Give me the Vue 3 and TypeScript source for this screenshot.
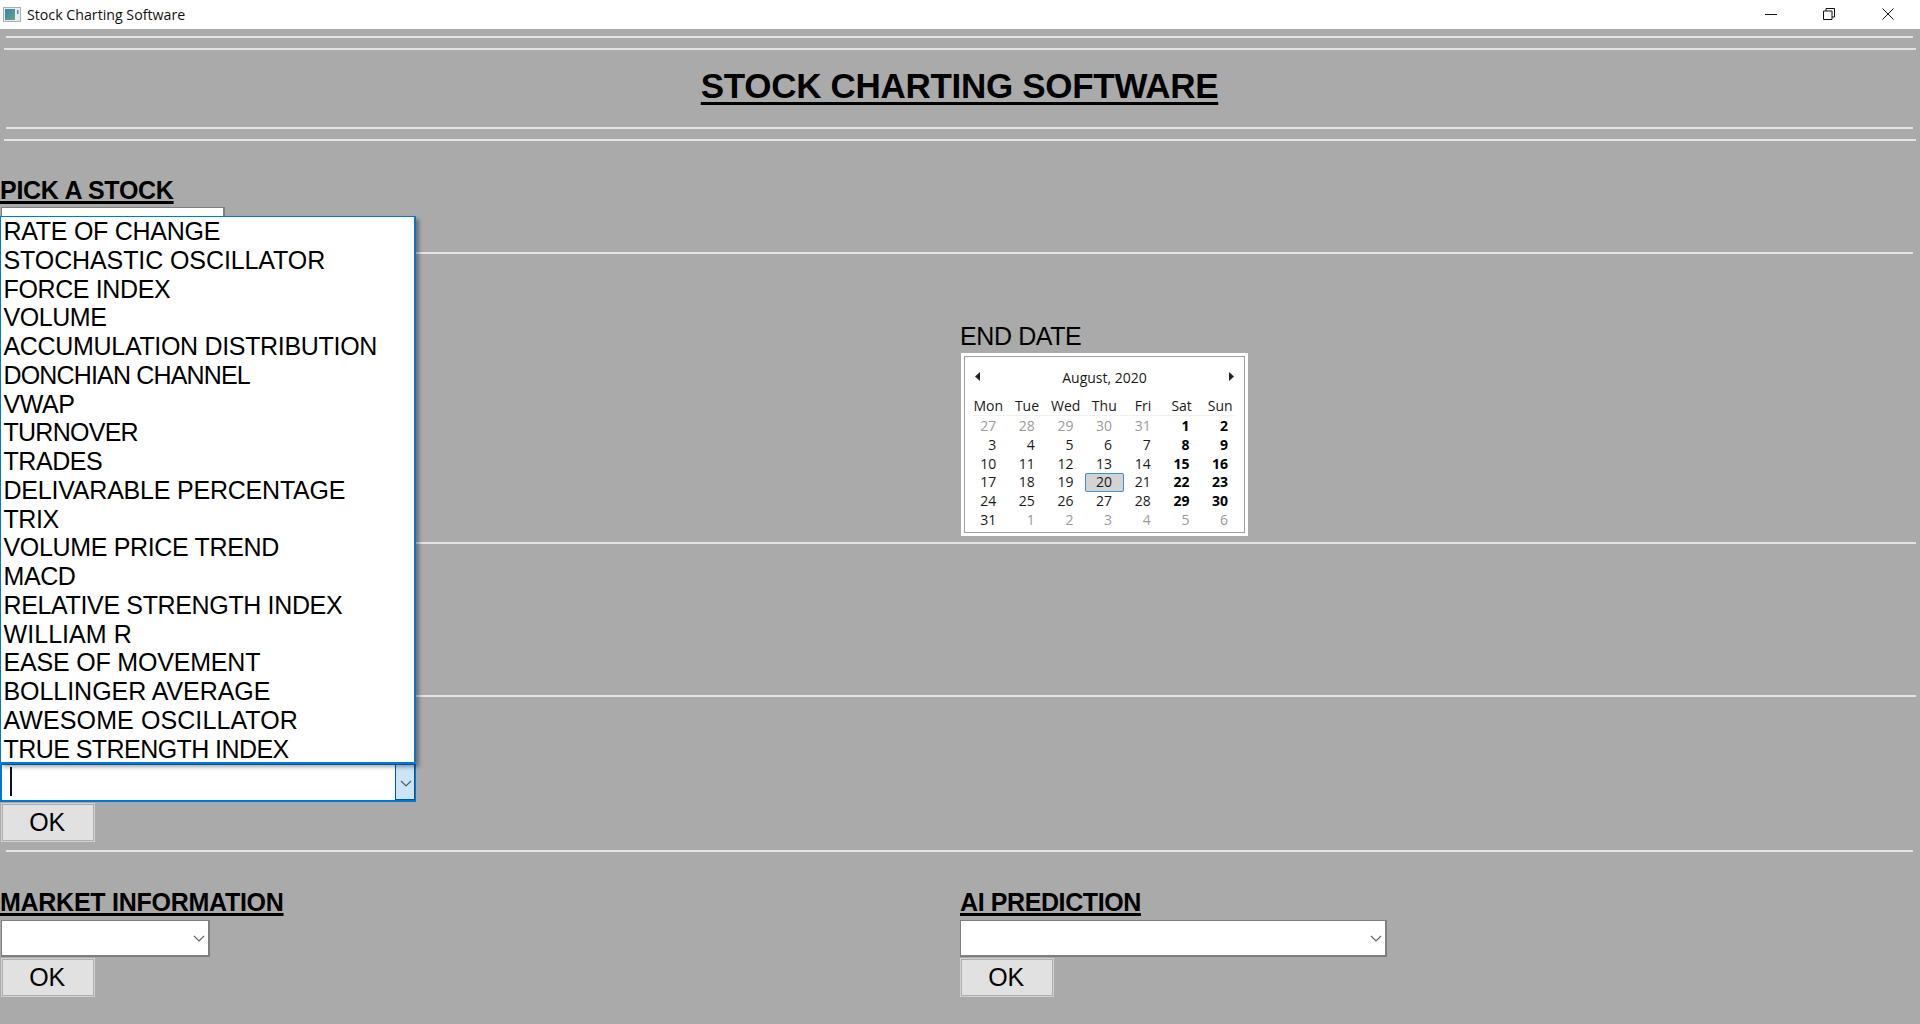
<script setup lang="ts">
interface Indicator { label: string; spacing: number }
const indicators: Indicator[] = [
  { label: 'RATE OF CHANGE', spacing: -0.27 },
  { label: 'STOCHASTIC OSCILLATOR', spacing: -0.1 },
  { label: 'FORCE INDEX', spacing: -0.37 },
  { label: 'VOLUME', spacing: -0.45 },
  { label: 'ACCUMULATION DISTRIBUTION', spacing: -0.32 },
  { label: 'DONCHIAN CHANNEL', spacing: -0.84 },
  { label: 'VWAP', spacing: -0.4 },
  { label: 'TURNOVER', spacing: -0.73 },
  { label: 'TRADES', spacing: -0.45 },
  { label: 'DELIVARABLE PERCENTAGE', spacing: -0.21 },
  { label: 'TRIX', spacing: -0.4 },
  { label: 'VOLUME PRICE TREND', spacing: -0.34 },
  { label: 'MACD', spacing: -0.4 },
  { label: 'RELATIVE STRENGTH INDEX', spacing: -0.35 },
  { label: 'WILLIAM R', spacing: 0.06 },
  { label: 'EASE OF MOVEMENT', spacing: -0.19 },
  { label: 'BOLLINGER AVERAGE', spacing: -0.05 },
  { label: 'AWESOME OSCILLATOR', spacing: 0.1 },
  { label: 'TRUE STRENGTH INDEX', spacing: -0.56 },
]
const weekdays: string[] = ['Mon', 'Tue', 'Wed', 'Thu', 'Fri', 'Sat', 'Sun']
interface Day { n: number; muted: boolean; weekend: boolean; selected: boolean }
const seq: number[] = [27, 28, 29, 30, 31]
for (let i = 1; i <= 31; i++) seq.push(i)
for (let i = 1; i <= 6; i++) seq.push(i)
const days: Day[] = seq.map((n, i) => {
  const muted = i < 5 || i >= 36
  return { n, muted, weekend: !muted && i % 7 >= 5, selected: i === 24 }
})
</script>

<template>
  <div class="window">
    <header class="titlebar">
      <svg class="app-icon" width="18" height="15" viewBox="0 0 18 15">
        <defs>
          <linearGradient id="ico" x1="0" y1="0" x2="1" y2="1">
            <stop offset="0" stop-color="#3f83a6" />
            <stop offset="1" stop-color="#5fa58a" />
          </linearGradient>
        </defs>
        <rect x="0.5" y="0.5" width="17" height="14" fill="#e6ebef" stroke="#a9b1b8" />
        <rect x="2" y="2" width="10" height="11" fill="url(#ico)" />
        <rect x="14" y="3" width="1.5" height="4" fill="#5d8a9a" />
      </svg>
      <span class="app-title">Stock Charting Software</span>
      <div class="controls">
        <span class="ctl">
          <svg width="12" height="12" viewBox="0 0 12 12"><path d="M0 6.5H12" stroke="#111" fill="none" /></svg>
        </span>
        <span class="ctl">
          <svg width="12" height="12" viewBox="0 0 12 12"><path d="M0.5 3H9V11.5H0.5ZM3 3V0.5H11.5V9H9" stroke="#111" fill="none" /></svg>
        </span>
        <span class="ctl">
          <svg width="12" height="12" viewBox="0 0 12 12"><path d="M0.5 0.5L11.5 11.5M11.5 0.5L0.5 11.5" stroke="#111" fill="none" /></svg>
        </span>
      </div>
    </header>

    <main class="content">
      <div class="rule short first"></div>
      <div class="rule long second"></div>
      <h1 class="main-title"><span>STOCK CHARTING SOFTWARE</span></h1>
      <div class="rule short"></div>
      <div class="rule long second"></div>

      <section class="sec sec-stock">
        <h2 class="heading">PICK A STOCK</h2>
        <div class="combo stock-combo"></div>
      </section>
      <div class="rule short"></div>

      <section class="sec sec-dates">
        <div class="date-col">
          <div class="plain-label">END DATE</div>
          <div class="calendar">
            <div class="cal-inner">
              <div class="cal-head">
                <svg width="6" height="9" viewBox="0 0 6 9"><path d="M5 0V9L0 4.5Z" fill="#222" /></svg>
                <span class="cal-month">August, 2020</span>
                <svg width="6" height="9" viewBox="0 0 6 9"><path d="M1 0V9L6 4.5Z" fill="#222" /></svg>
              </div>
              <div class="cal-weekdays">
                <span v-for="w in weekdays" :key="w">{{ w }}</span>
              </div>
              <div class="cal-days">
                <span
                  v-for="(d, i) in days"
                  :key="i"
                  class="day"
                  :class="{ muted: d.muted, weekend: d.weekend, selected: d.selected }"
                >{{ d.n }}</span>
              </div>
            </div>
          </div>
        </div>
      </section>
      <div class="rule long"></div>

      <section class="sec sec-empty"></section>
      <div class="rule long"></div>

      <section class="sec sec-indicator">
        <div class="indicator-box">
          <ul class="popup">
            <li
              v-for="item in indicators"
              :key="item.label"
              :style="{ letterSpacing: item.spacing + 'px' }"
            >{{ item.label }}</li>
          </ul>
          <div class="combo-focused">
            <span class="field"><i class="caret"></i></span>
            <span class="drop-btn">
              <svg width="12" height="7" viewBox="0 0 12 7"><path d="M1 1L6 6L11 1" stroke="#4b5a68" stroke-width="1.2" fill="none" /></svg>
            </span>
          </div>
          <button class="ok" type="button">OK</button>
        </div>
      </section>
      <div class="rule short"></div>

      <section class="sec sec-bottom">
        <div class="col-left">
          <h2 class="heading">MARKET INFORMATION</h2>
          <div class="combo market-combo">
            <svg width="12" height="7" viewBox="0 0 12 7"><path d="M1 1L6 6L11 1" stroke="#666" stroke-width="1.2" fill="none" /></svg>
          </div>
          <button class="ok" type="button">OK</button>
        </div>
        <div class="col-right">
          <h2 class="heading ai">AI PREDICTION</h2>
          <div class="combo ai-combo">
            <svg width="12" height="7" viewBox="0 0 12 7"><path d="M1 1L6 6L11 1" stroke="#666" stroke-width="1.2" fill="none" /></svg>
          </div>
          <button class="ok" type="button">OK</button>
        </div>
      </section>
    </main>
  </div>
</template>

<style>
html, body { margin: 0; background: #aaaaaa; }
</style>

<style scoped>
.window {
  width: 1920px;
  height: 1024px;
  display: flex;
  flex-direction: column;
  overflow: hidden;
  font-family: "Liberation Sans", Arial, sans-serif;
  color: #000;
}
.titlebar {
  height: 29px;
  flex: none;
  background: #fff;
  display: flex;
  align-items: center;
  padding-left: 3px;
}
.app-icon { flex: none; margin-bottom: 1px; }
.app-title {
  margin-left: 6px;
  font: 14.2px "Open Sans", sans-serif;
  color: #111;
  margin-bottom: 1px;
}
.controls { margin-left: auto; display: flex; padding-right: 3px; }
.ctl {
  width: 58.5px;
  height: 29px;
  display: flex;
  align-items: center;
  justify-content: center;
  padding-bottom: 1px;
  box-sizing: border-box;
}
.content { flex: 1; background: #aaaaaa; display: flex; flex-direction: column; min-height: 0; }
.rule { flex: none; height: 2px; background: #e4e4e4; }
.rule.short { margin: 0 7px 0 6px; }
.rule.long { margin: 0 4px; }
.rule.first { margin-top: 7px; }
.rule.second { margin-top: 10px; }
.main-title {
  margin: 0;
  height: 77px;
  display: flex;
  justify-content: center;
  box-sizing: border-box;
  padding-top: 15px;
  font-size: 35px;
  line-height: 42px;
  letter-spacing: -0.3px;
  font-weight: 700;
  text-decoration: underline;
  text-decoration-thickness: 3px;
  text-underline-offset: 4px;
}
.main-title span { margin-left: -1px; }
.heading {
  margin: 0;
  font-size: 25px;
  line-height: 32px;
  letter-spacing: -0.27px;
  font-weight: 700;
  text-decoration: underline;
  text-decoration-thickness: 3px;
  text-underline-offset: 2px;
}
.heading.ai { letter-spacing: -0.4px; }
.plain-label { font-size: 25px; line-height: 32px; letter-spacing: -0.4px; }
.sec { flex: none; box-sizing: border-box; }
.sec-stock { height: 111px; padding-top: 33px; }
.combo {
  box-sizing: border-box;
  background: #fff;
  border: 1px solid #7f7f7f;
  border-width: 1px 2px 2px 1px;
  height: 37px;
  display: flex;
  align-items: center;
  justify-content: flex-end;
  padding-right: 3px;
  margin-top: 2px;
}
.stock-combo { width: 224px; margin-left: 1px; margin-top: 1px; }
.market-combo { width: 209px; }
.ai-combo { width: 427px; }
.sec-dates { height: 288px; padding: 66px 0 0 960px; }
.calendar {
  box-sizing: border-box;
  width: 287px;
  height: 183px;
  margin: 1px 0 0 1px;
  background: #fff;
  padding: 3px;
}
.cal-inner {
  box-sizing: border-box;
  height: 177px;
  border: 1px solid #a0a0a0;
  background: #fff;
  padding: 0 8px 0 4px;
  font-family: "Open Sans", sans-serif;
  color: #1a1a1a;
}
.cal-head {
  height: 25px;
  margin-top: 8px;
  display: flex;
  align-items: center;
  justify-content: space-between;
  padding: 0 2px 0 6px;
}
.cal-head svg { margin-bottom: 2px; }
.cal-month { font-size: 14px; }
.cal-weekdays, .cal-days { display: grid; grid-template-columns: repeat(7, 38.67px); }
.cal-weekdays {
  font-size: 14px;
  line-height: 20px;
  text-align: center;
  height: 20px;
  margin-top: 6px;
  position: relative;
}
.cal-weekdays::after {
  content: "";
  position: absolute;
  left: 4px;
  width: 262px;
  bottom: 0;
  height: 1px;
  background: #f0f0f0;
}
.cal-days { font-size: 14px; grid-auto-rows: 18.8px; margin-top: 1px; }
.day {
  text-align: right;
  padding-right: 11.5px;
  line-height: 18.8px;
  box-sizing: border-box;
}
.day.muted { color: #9a9a9a; }
.day.weekend { font-weight: 700; color: #000; }
.day.selected {
  background: #d3d3d3;
  outline: 1px solid #3f8fd6;
  outline-offset: -1px;
  border-radius: 2px;
}
.sec-empty { height: 151px; }
.sec-indicator { height: 153px; padding-top: 67px; }
.indicator-box { position: relative; width: 416px; }
.popup {
  position: absolute;
  left: 0;
  right: 0;
  top: -548px;
  margin: 0;
  box-sizing: border-box;
  height: 548px;
  border: 1px solid #0078d7;
  border-width: 1px 2px 2px 1px;
  background: #fff;
  padding: 0 0 0 2.5px;
  list-style: none;
  box-shadow: 3px 3px 4px rgba(0, 0, 0, 0.35);
  z-index: 2;
}
.popup li { font-size: 25px; line-height: 28.75px; white-space: nowrap; }
.combo-focused {
  display: flex;
  height: 38px;
  box-sizing: border-box;
  border: 1px solid #0078d7;
  border-width: 1px 1px 2px 2px;
  background: #fff;
}
.field { flex: 1; position: relative; }
.caret { position: absolute; left: 8px; top: 2px; width: 1.5px; height: 29px; background: #111; }
.drop-btn {
  width: 20px;
  flex: none;
  background: #cce4f7;
  border-left: 1px solid #005499;
  box-shadow: inset -1px 0 0 #005499, inset 0 -1px 0 #005499;
  display: flex;
  align-items: center;
  justify-content: center;
  box-sizing: border-box;
  padding-top: 1px;
}
.ok {
  display: block;
  box-sizing: border-box;
  width: 94px;
  height: 39px;
  margin: 1px 0 0 1px;
  padding: 0 2px 0 0;
  background: #e1e1e1;
  border: 2px solid #adadad;
  outline: 1px solid #d2d2d2;
  outline-offset: -1px;
  font: 25px "Liberation Sans", Arial, sans-serif;
  letter-spacing: -0.27px;
  color: #000;
}
.sec-bottom { display: flex; padding-top: 34px; }
.col-left { width: 960px; }
.col-left .ok, .col-left .combo { margin-left: 1px; }
.col-right .ok { margin-left: 0; }
.col-right { width: 427px; }
</style>
